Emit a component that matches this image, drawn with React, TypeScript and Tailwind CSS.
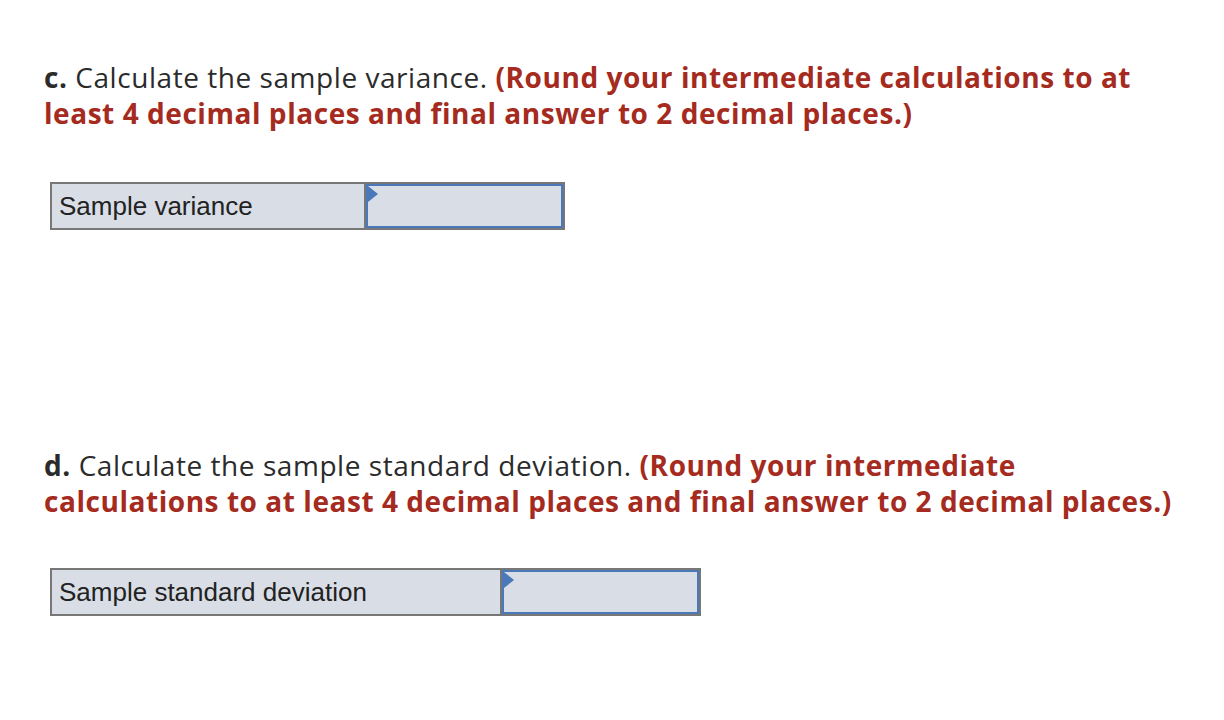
import React from "react";

function Row({ label, labelW, inputW }: { label: string; labelW: number; inputW: number }) {
  return (
    <div className="flex border-2 border-[#777777] bg-[#d9dde5]" style={{ width: labelW + inputW + 4 }}>
      <div
        className="h-[44px] flex items-center pl-[7px] text-[26px] text-[#222] border-r-2 border-[#777777]"
        style={{ width: labelW, fontFamily: '"Liberation Sans", Arial, sans-serif' }}
      >
        {label}
      </div>
      <div className="relative flex-1 h-[44px] border-2 border-[#4a78b8] bg-[#d9dde5]">
        <div className="absolute left-0 top-0 w-0 h-0 border-t-[8px] border-b-[8px] border-l-[10px] border-t-transparent border-b-transparent border-l-[#4a78b8]" />
      </div>
    </div>
  );
}

export default function App() {
  const font = { fontFamily: '"Open Sans", Lato, sans-serif' };
  return (
    <div className="w-[1224px] h-[720px] bg-white pl-[44px] pt-[59px]" style={font}>
      <p className="text-[28px] leading-[36px] tracking-[0.55px] text-[#2b2b2b] whitespace-nowrap">
        <span className="font-bold">c.</span> Calculate the sample variance.{" "}
        <span className="font-bold text-[#a52a20]">
          (Round your intermediate calculations to at
          <br />
          least 4 decimal places and final answer to 2 decimal places.)
        </span>
      </p>
      <div className="mt-[51px] ml-[6px]">
        <Row label="Sample variance" labelW={314} inputW={197} />
      </div>
      <p className="mt-[217px] text-[28px] leading-[36px] tracking-[0.55px] text-[#2b2b2b] whitespace-nowrap">
        <span className="font-bold">d.</span> Calculate the sample standard deviation.{" "}
        <span className="font-bold text-[#a52a20]">
          (Round your intermediate
          <br />
          calculations to at least 4 decimal places and final answer to 2 decimal places.)
        </span>
      </p>
      <div className="mt-[49px] ml-[6px]">
        <Row label="Sample standard deviation" labelW={450} inputW={197} />
      </div>
    </div>
  );
}
